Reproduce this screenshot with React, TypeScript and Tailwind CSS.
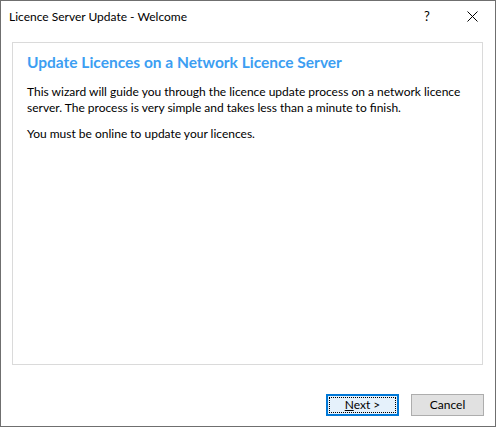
import React from 'react';

const TitleBar: React.FC = () => (
  <div className="h-[31px] flex items-center shrink-0">
    <span className="pl-[8px] text-[12px] text-black">Licence Server Update - Welcome</span>
    <span className="ml-auto w-[46px] text-center text-[13px] text-black">?</span>
    <span className="w-[45px] flex items-center justify-center">
      <svg width="11" height="11" viewBox="0 0 11 11">
        <path d="M0.5 0.5 L10.5 10.5 M10.5 0.5 L0.5 10.5" stroke="#000" strokeWidth="1" />
      </svg>
    </span>
  </div>
);

export default function App() {
  return (
    <div className="w-[496px] h-[427px] bg-white border border-[#6f6f6f] flex flex-col font-['Lato',sans-serif]">
      <TitleBar />

      {/* welcome panel */}
      <div className="ml-[11px] mr-[12px] mt-[10px] h-[323px] border border-[#dadada] px-[14px] pt-[8px] shrink-0">
        <h1 className="text-[15.5px] font-bold text-[#3c9ef2] leading-[22px]">
          Update Licences on a Network Licence Server
        </h1>
        <p className="mt-[11px] text-[12px] leading-[16px] text-black">
          This wizard will guide you through the licence update process on a network licence server. The process is very simple and takes less than a minute to finish.
        </p>
        <p className="mt-[10px] text-[12px] leading-[16px] text-black">
          You must be online to update your licences.
        </p>
      </div>

      {/* buttons */}
      <div className="flex justify-end gap-[12px] pr-[11px] pt-[29px]">
        <button className="w-[73px] h-[22px] bg-[#e5f1fb] border-2 border-[#0078d7] p-[1px] text-[12px] text-black">
          <span className="flex h-full w-full items-center justify-center border border-dotted border-black">
            <span><u>N</u>ext &gt;</span>
          </span>
        </button>
        <button className="w-[73px] h-[22px] bg-[#e1e1e1] border border-[#adadad] text-[12px] text-black">
          Cancel
        </button>
      </div>
    </div>
  );
}
